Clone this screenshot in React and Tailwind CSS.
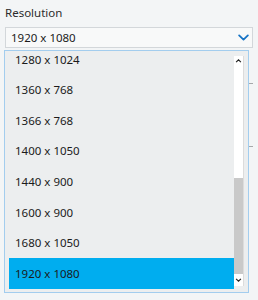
const resolutions = [
  "1280 x 1024",
  "1360 x 768",
  "1366 x 768",
  "1400 x 1050",
  "1440 x 900",
  "1600 x 900",
  "1680 x 1050",
  "1920 x 1080",
];

const selected = "1920 x 1080";

const Chevron = ({ className }) => (
  <svg viewBox="0 0 12 8" className={className} fill="none">
    <path d="M1 1.5 L6 6.5 L11 1.5" stroke="currentColor" strokeWidth="2" strokeLinecap="round" strokeLinejoin="round" />
  </svg>
);

const App = () => {
  return (
    <div
      className="relative w-[258px] h-[300px] overflow-hidden bg-[#f3f5f6] text-[#1b1b1b]"
      style={{ fontFamily: '"Segoe UI", "Noto Sans", sans-serif' }}
    >
      {/* page content behind the popup */}
      <div className="px-[5px] pt-[4px]">
        <div className="text-[11.5px] leading-[17px] text-[#2b2b2b]">Resolution</div>
        <div className="mt-[6px] h-[21px] flex items-center justify-between pl-[5px] pr-[3px] bg-[#f8f9f9] border border-[#d3d7da]">
          <span className="text-[11.5px] leading-none">1920 x 1080</span>
          <Chevron className="w-[11px] h-[7px] text-[#1573c5]" />
        </div>
        <div className="mt-[35px] ml-auto w-[10px] h-px bg-[#a6a8aa]"></div>
        <div className="mt-[62px] ml-auto w-[10px] h-px bg-[#a6a8aa]"></div>
      </div>

      {/* dropdown list */}
      <div className="absolute left-[4px] top-[50px] w-[245px] h-[243px] border border-[#a3cdee] bg-[#eceeef] flex">
        <div className="flex-1 pl-[4px] pt-[3px] flex flex-col">
          <div className="flex-1 overflow-hidden">
            <div className="mt-[-10px]">
              {resolutions.map((r) => (
                <div
                  key={r}
                  className={`h-[30.6px] flex items-center pl-[6px] text-[11.5px] ${
                    r === selected ? "bg-[#00adef]" : ""
                  }`}
                >
                  {r}
                </div>
              ))}
            </div>
          </div>
        </div>
        <div className="w-[10px] mr-[4px] mt-[5px] mb-[6px] flex flex-col items-center bg-white border-r border-[#dcdcdc]">
          <div className="h-[9px] flex items-center">
            <svg viewBox="0 0 8 5" className="w-[7px] h-[4px]" fill="none">
              <path d="M1 4 L4 1 L7 4" stroke="#222" strokeWidth="1.4" />
            </svg>
          </div>
          <div className="w-full flex-1 flex flex-col">
            <div className="h-[113px]"></div>
            <div className="flex-1 bg-[#c9c9c9]"></div>
          </div>
          <div className="h-[12px] flex items-center">
            <svg viewBox="0 0 8 5" className="w-[7px] h-[4px]" fill="none">
              <path d="M1 1 L4 4 L7 1" stroke="#222" strokeWidth="1.4" />
            </svg>
          </div>
        </div>
      </div>
    </div>
  );
};

export default App;
